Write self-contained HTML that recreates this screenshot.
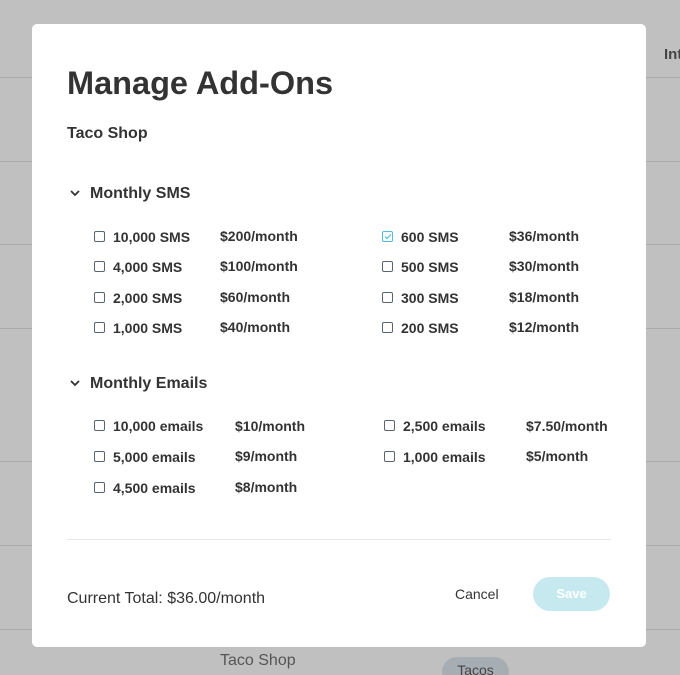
<!DOCTYPE html>
<html><head><style>
*{margin:0;padding:0;box-sizing:border-box}
html,body{width:680px;height:675px;overflow:hidden}
body{background:#c0c0c0;font-family:"Liberation Sans",Arial,sans-serif;position:relative;color:#333}
.hl{position:absolute;left:0;width:680px;height:1px;background:#ababab}
.modal{position:absolute;left:32px;top:24px;width:614px;height:623px;background:#fff;border-radius:5px}
.a{position:absolute;white-space:nowrap}
h1{position:absolute;left:35px;top:41px;font-size:32.5px;font-weight:bold;color:#333}
.b{font-weight:bold;font-size:14px;color:#333}
.cb{position:absolute;width:11px;height:11px;border:1.3px solid #5a6470;border-radius:2px}
.cb.on{border-color:#4fbcd8}
</style></head><body>
<div class="hl" style="top:77px"></div><div class="hl" style="top:161px"></div><div class="hl" style="top:244px"></div><div class="hl" style="top:328px"></div><div class="hl" style="top:461px"></div><div class="hl" style="top:545px"></div><div class="hl" style="top:629px"></div>
<div class="a b" style="left:664px;top:46px;font-size:15px;color:#444">Int</div>
<div class="a" style="left:220px;top:652px;font-size:16px;color:#555">Taco Shop</div>
<div class="a" style="left:442px;top:657px;width:67px;height:30px;border-radius:15px;background:#a6adb3;font-size:14px;color:#444;text-align:center;line-height:26px">Tacos</div>
<div class="modal">
<h1>Manage Add-Ons</h1>
<div class="a b" style="left:35px;top:101px;font-size:16px">Taco Shop</div>
<svg class="a" style="left:37px;top:165px" width="12" height="8"><path d="M2 2l4 4 4-4" stroke="#333" stroke-width="1.8" fill="none"/></svg>
<div class="a b" style="left:58px;top:161px;font-size:16px">Monthly SMS</div>
<div class="cb" style="left:62px;top:207px"></div><div class="a b" style="left:81px;top:205px">10,000 SMS</div><div class="a b" style="left:188px;top:204px">$200/month</div>
<div class="cb" style="left:62px;top:237px"></div><div class="a b" style="left:81px;top:235px">4,000 SMS</div><div class="a b" style="left:188px;top:234px">$100/month</div>
<div class="cb" style="left:62px;top:268px"></div><div class="a b" style="left:81px;top:266px">2,000 SMS</div><div class="a b" style="left:188px;top:265px">$60/month</div>
<div class="cb" style="left:62px;top:298px"></div><div class="a b" style="left:81px;top:296px">1,000 SMS</div><div class="a b" style="left:188px;top:295px">$40/month</div>
<div class="cb on" style="left:350px;top:207px"><svg style="position:absolute;left:1px;top:1px" width="8" height="7"><path d="M1 3.5l2 2 4-4" stroke="#4fbcd8" stroke-width="1.2" fill="none"/></svg></div><div class="a b" style="left:369px;top:205px">600 SMS</div><div class="a b" style="left:477px;top:204px">$36/month</div>
<div class="cb" style="left:350px;top:237px"></div><div class="a b" style="left:369px;top:235px">500 SMS</div><div class="a b" style="left:477px;top:234px">$30/month</div>
<div class="cb" style="left:350px;top:268px"></div><div class="a b" style="left:369px;top:266px">300 SMS</div><div class="a b" style="left:477px;top:265px">$18/month</div>
<div class="cb" style="left:350px;top:298px"></div><div class="a b" style="left:369px;top:296px">200 SMS</div><div class="a b" style="left:477px;top:295px">$12/month</div>
<svg class="a" style="left:37px;top:355px" width="12" height="8"><path d="M2 2l4 4 4-4" stroke="#333" stroke-width="1.8" fill="none"/></svg>
<div class="a b" style="left:58px;top:351px;font-size:16px">Monthly Emails</div>
<div class="cb" style="left:62px;top:396px"></div><div class="a b" style="left:81px;top:394px">10,000 emails</div><div class="a b" style="left:203px;top:394px">$10/month</div>
<div class="cb" style="left:62px;top:427px"></div><div class="a b" style="left:81px;top:425px">5,000 emails</div><div class="a b" style="left:203px;top:424px">$9/month</div>
<div class="cb" style="left:62px;top:458px"></div><div class="a b" style="left:81px;top:456px">4,500 emails</div><div class="a b" style="left:203px;top:455px">$8/month</div>
<div class="cb" style="left:352px;top:396px"></div><div class="a b" style="left:371px;top:394px">2,500 emails</div><div class="a b" style="left:494px;top:394px">$7.50/month</div>
<div class="cb" style="left:352px;top:427px"></div><div class="a b" style="left:371px;top:425px">1,000 emails</div><div class="a b" style="left:494px;top:424px">$5/month</div>
<div class="a" style="left:35px;top:515px;width:544px;height:1px;background:#e6e6e6"></div>
<div class="a" style="left:35px;top:566px;font-size:16px;color:#333">Current Total: $36.00/month</div>
<div class="a" style="left:423px;top:562px;font-size:14px;color:#333">Cancel</div>
<div class="a" style="left:501px;top:553px;width:77px;height:34px;border-radius:17px;background:#c6e9f0;color:#fff;font-size:13px;font-weight:bold;text-align:center;line-height:34px">Save</div>
</div>
</body></html>
